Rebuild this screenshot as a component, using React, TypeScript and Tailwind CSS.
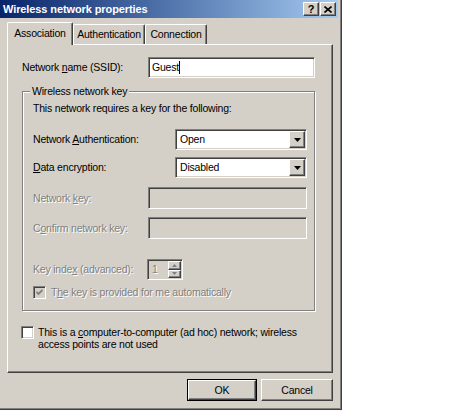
import type { ReactNode } from 'react'

const sunken =
  'border border-t-[#808080] border-l-[#808080] border-b-white border-r-white shadow-[inset_1px_1px_0_#404040,inset_-1px_-1px_0_#d4d0c8]'
const raised =
  'border border-t-white border-l-white border-b-[#404040] border-r-[#404040] shadow-[inset_-1px_-1px_0_#808080]'
const dis = 'text-[#808080] [text-shadow:1px_1px_0_#fff]'

function U({ children }: { children: ReactNode }) {
  return <span className="underline decoration-1 underline-offset-[1px]">{children}</span>
}

function Combo({ value }: { value: string }) {
  return (
    <div className={`${sunken} w-[132px] h-[21px] p-[1px] bg-white flex items-center`}>
      <span className="flex-1 pl-[3px]">{value}</span>
      <div className={`${raised} bg-[#d4d0c8] w-[16px] h-full flex items-center justify-center`}>
        <svg width="7" height="4" viewBox="0 0 7 4">
          <path d="M0 0h7L3.5 4z" fill="#000" />
        </svg>
      </div>
    </div>
  )
}

function Check({ checked, disabled }: { checked?: boolean; disabled?: boolean }) {
  return (
    <div
      className={`${sunken} w-[13px] h-[13px] shrink-0 flex items-center justify-center ${
        disabled ? 'bg-[#d4d0c8]' : 'bg-white'
      }`}
    >
      {checked && (
        <svg width="7" height="7" viewBox="0 0 7 7">
          <path d="M0.5 3l2 2 4-4" stroke="#808080" strokeWidth="1.8" fill="none" />
        </svg>
      )}
    </div>
  )
}

function Tab({ label, active, w }: { label: string; active?: boolean; w: string }) {
  return (
    <div
      className={`${w} flex items-center justify-center border-t border-l border-r border-t-white border-l-white border-r-[#404040] rounded-t-[2px] shadow-[inset_-1px_0_0_#808080] bg-[#d4d0c8] ${
        active ? 'h-[23px] -mb-[1px] relative z-10 pb-[2px]' : 'h-[20px]'
      }`}
    >
      {label}
    </div>
  )
}

export default function App() {
  return (
    <div className="w-[474px] h-[410px] bg-white overflow-hidden font-['Liberation_Sans',Arial,sans-serif] text-[10.5px] tracking-[-0.2px] text-black leading-[13px]">
      <div className="w-[342px] h-[410px] bg-[#d4d0c8] flex flex-col border-r border-b border-r-[#404040] border-b-[#404040] shadow-[inset_-1px_-1px_0_#808080]">
        {/* title bar */}
        <div className="h-[18px] mr-[3px] bg-linear-to-r from-[#0a246a] to-[#a6caf0] flex items-center pl-[3px] pr-[2px]">
          <span className="flex-1 text-white font-bold text-[11px] tracking-[-0.1px]">Wireless network properties</span>
          <div className={`${raised} bg-[#d4d0c8] w-[16px] h-[14px] flex items-center justify-center font-bold text-[11px] leading-none`}>
            ?
          </div>
          <div className={`${raised} bg-[#d4d0c8] w-[16px] h-[14px] ml-[1px] flex items-center justify-center`}>
            <svg width="8" height="7" viewBox="0 0 8 7">
              <path d="M0.5 0.5l7 6M7.5 0.5l-7 6" stroke="#000" strokeWidth="1.6" />
            </svg>
          </div>
        </div>

        {/* tabs */}
        <div className="flex items-end h-[22px] mt-[4px] ml-[7px]">
          <Tab label="Association" active w="w-[66px]" />
          <Tab label="Authentication" w="w-[72px]" />
          <Tab label="Connection" w="w-[62px]" />
        </div>

        {/* panel */}
        <div className="ml-[7px] w-[326px] h-[329px] border border-t-white border-l-white border-b-[#404040] border-r-[#404040] shadow-[inset_-1px_-1px_0_#808080] pl-[14px] flex flex-col">
          <div className="flex items-center h-[21px] mt-[12px]">
            <span className="w-[126px]">
              Network <U>n</U>ame (SSID):
            </span>
            <div className={`${sunken} w-[167px] h-[21px] bg-white flex items-center pl-[3px]`}>
              Guest<span className="w-px h-[13px] bg-black" />
            </div>
          </div>

          {/* group box */}
          <div className="relative mt-[13px] w-[293px] h-[220px] border border-[#808080] shadow-[1px_1px_0_#fff,inset_1px_1px_0_#fff] pl-[10px] pt-[10px] flex flex-col">
            <span className="absolute -top-[7px] left-[7px] px-[2px] bg-[#d4d0c8]">Wireless network key</span>
            <div>This network requires a key for the following:</div>

            <div className="flex items-center mt-[14px]">
              <span className="w-[142px]">
                Network <U>A</U>uthentication:
              </span>
              <Combo value="Open" />
            </div>
            <div className="flex items-center mt-[7px]">
              <span className="w-[142px]">
                <U>D</U>ata encryption:
              </span>
              <Combo value="Disabled" />
            </div>

            <div className="flex items-center mt-[9px]">
              <span className={`w-[115px] ${dis}`}>
                Network <U>k</U>ey:
              </span>
              <div className={`${sunken} w-[159px] h-[22px] bg-[#d4d0c8]`} />
            </div>
            <div className="flex items-center mt-[8px]">
              <span className={`w-[115px] ${dis}`}>
                C<U>o</U>nfirm network key:
              </span>
              <div className={`${sunken} w-[159px] h-[22px] bg-[#d4d0c8]`} />
            </div>

            <div className="flex items-center mt-[20px]">
              <span className={`w-[114px] ${dis}`}>
                Key inde<U>x</U> (advanced):
              </span>
              <div className={`${sunken} w-[36px] h-[21px] p-[1px] flex bg-[#d4d0c8]`}>
                <span className={`flex-1 pl-[3px] leading-[17px] ${dis}`}>1</span>
                <div className="flex flex-col w-[13px]">
                  <div className={`${raised} flex-1 flex items-center justify-center`}>
                    <svg width="5" height="3" viewBox="0 0 5 3">
                      <path d="M0 3h5L2.5 0z" fill="#808080" />
                    </svg>
                  </div>
                  <div className={`${raised} flex-1 flex items-center justify-center`}>
                    <svg width="5" height="3" viewBox="0 0 5 3">
                      <path d="M0 0h5L2.5 3z" fill="#808080" />
                    </svg>
                  </div>
                </div>
              </div>
            </div>

            <div className="flex items-center gap-[5px] mt-[6px]">
              <Check checked disabled />
              <span className={dis}>
                T<U>h</U>e key is provided for me automatically
              </span>
            </div>
          </div>

          {/* ad hoc */}
          <div className="flex items-start gap-[4px] mt-[15px] -ml-[1px] leading-[12px]">
            <Check />
            <span>
              This is a <U>c</U>omputer-to-computer (ad hoc) network; wireless
              <br />
              access points are not used
            </span>
          </div>
        </div>

        {/* buttons */}
        <div className="flex justify-end gap-[4px] mt-[6px] mr-[8px]">
          <div className="border border-black">
            <div className={`${raised} bg-[#d4d0c8] w-[68px] h-[20px] flex items-center justify-center`}>OK</div>
          </div>
          <div className={`${raised} bg-[#d4d0c8] w-[72px] h-[22px] flex items-center justify-center`}>Cancel</div>
        </div>
      </div>
    </div>
  )
}
